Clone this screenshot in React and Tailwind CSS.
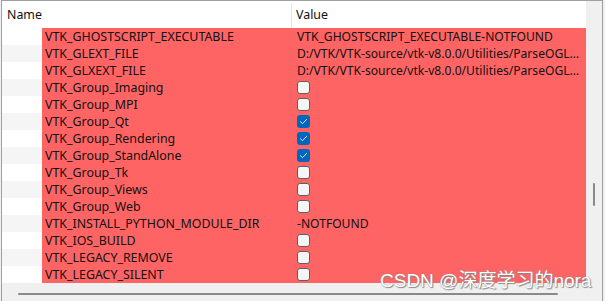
import React from "react";

const rows = [
  { name: "VTK_GHOSTSCRIPT_EXECUTABLE", value: "VTK_GHOSTSCRIPT_EXECUTABLE-NOTFOUND" },
  { name: "VTK_GLEXT_FILE", value: "D:/VTK/VTK-source/vtk-v8.0.0/Utilities/ParseOGL…" },
  { name: "VTK_GLXEXT_FILE", value: "D:/VTK/VTK-source/vtk-v8.0.0/Utilities/ParseOGL…" },
  { name: "VTK_Group_Imaging", check: false },
  { name: "VTK_Group_MPI", check: false },
  { name: "VTK_Group_Qt", check: true },
  { name: "VTK_Group_Rendering", check: true },
  { name: "VTK_Group_StandAlone", check: true },
  { name: "VTK_Group_Tk", check: false },
  { name: "VTK_Group_Views", check: false },
  { name: "VTK_Group_Web", check: false },
  { name: "VTK_INSTALL_PYTHON_MODULE_DIR", value: "-NOTFOUND" },
  { name: "VTK_IOS_BUILD", check: false },
  { name: "VTK_LEGACY_REMOVE", check: false },
  { name: "VTK_LEGACY_SILENT", check: false },
];

const Checkbox = ({ checked }) =>
  checked ? (
    <div className="w-[13px] h-[13px] rounded-[3px] bg-[#0067c0] flex items-center justify-center">
      <svg width="9" height="9" viewBox="0 0 9 9" fill="none">
        <path d="M1.5 4.8 L3.6 6.6 L7.6 2.4" stroke="#dfeaf7" strokeWidth="1" strokeLinecap="round" strokeLinejoin="round" />
      </svg>
    </div>
  ) : (
    <div className="w-[13px] h-[13px] rounded-[3px] border border-[#5e5e5e] bg-[#f5f5f5]" />
  );

const App = () => {
  return (
    <div className="relative w-[605px] h-[301px] bg-[#f0f0f0] font-['Noto_Sans','Liberation_Sans',sans-serif] text-[12.4px] text-[#111] overflow-hidden">
      <div className="w-[602px] h-[301px] flex flex-col border-l border-t border-r border-[#a0a0a0] ml-px">
        <div className="flex">
          {/* table */}
          <div className="w-[584px] bg-white flex flex-col">
            <div className="h-[27px] flex items-stretch">
              <div className="w-[290px] border-r border-[#e5e5e5] mt-[2px] pl-[5px] flex items-center leading-none">
                Name
              </div>
              <div className="flex-1 pl-[4px] flex items-center leading-none mt-[2px]">Value</div>
            </div>
            {rows.map((r, i) => (
              <div key={r.name} className={`h-[17px] flex ${i % 2 ? "bg-[#f5f5f5]" : "bg-white"}`}>
                <div className="w-[40px]" />
                <div className="flex-1 flex bg-[#ff6464] leading-[17px]">
                  <div className="w-[251px] pl-[3px] whitespace-nowrap">{r.name}</div>
                  <div className="w-[293px] pl-[4px] flex items-center min-w-0">
                    {r.value ? (
                      <span className="whitespace-nowrap text-[12.1px]">{r.value}</span>
                    ) : (
                      <Checkbox checked={r.check} />
                    )}
                  </div>
                </div>
              </div>
            ))}
          </div>
          {/* vertical scrollbar */}
          <div className="flex-1 flex justify-center">
            <div className="w-[2px] h-[23px] mt-[182px] bg-[#8a8a8a] rounded-full ml-[-1px]" />
          </div>
        </div>
        {/* horizontal scrollbar */}
        <div className="flex-1 flex items-center pl-[16px]">
          <div className="w-[540px] h-[2px] bg-[#8a8a8a] rounded-full mt-[3px]" />
        </div>
      </div>
      <div className="absolute left-[380px] top-[271px] text-[19px] leading-none text-white font-['Liberation_Sans','Noto_Sans_CJK_SC',sans-serif] whitespace-nowrap [text-shadow:0_0_1px_#7a7a7a,1px_1px_1px_#8a8a8a]">
        CSDN @深度学习的nora
      </div>
    </div>
  );
};

export default App;
